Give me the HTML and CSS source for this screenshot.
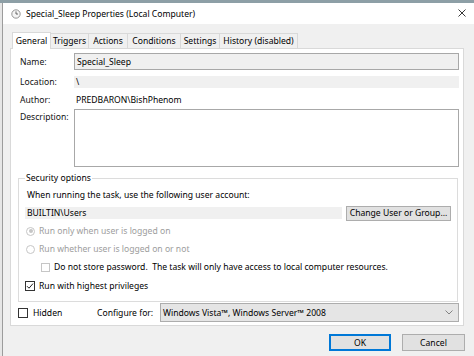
FILE: index.html
```
<!DOCTYPE html>
<html>
<head>
<meta charset="utf-8">
<link rel="stylesheet" href="styles.css">
</head>
<body>
<div class="topline"></div>
<div class="window">
  <div class="titlebar">
    <svg class="appicon" width="10" height="10" viewBox="0 0 10 10"><circle cx="5" cy="5" r="4.2" fill="#f4f4f4" stroke="#8a8a8a" stroke-width="0.9"/><path d="M5 2.4V5h2" fill="none" stroke="#555" stroke-width="0.9"/></svg>
    <span class="title">Special_Sleep Properties (Local Computer)</span>
    <svg class="close" width="8" height="8" viewBox="0 0 8 8"><path d="M0.5 0.5L7.5 7.5M7.5 0.5L0.5 7.5" stroke="#222" stroke-width="0.9"/></svg>
  </div>
  <div class="content">
    <div class="tabs">
      <div class="tab sel t-gen">General</div>
      <div class="tab t-trg">Triggers</div>
      <div class="tab t-act">Actions</div>
      <div class="tab t-cnd">Conditions</div>
      <div class="tab t-set">Settings</div>
      <div class="tab t-his">History (disabled)</div>
    </div>
    <div class="panel">
      <div class="row r-name"><span class="lbl">Name:</span><div class="field box ro">Special_Sleep</div></div>
      <div class="row r-loc"><span class="lbl">Location:</span><div class="field band">\</div></div>
      <div class="row r-auth"><span class="lbl">Author:</span><div class="field plain">PREDBARON\BishPhenom</div></div>
      <div class="row r-desc"><span class="lbl">Description:</span><div class="field box desc"></div></div>
      <fieldset class="group">
        <legend>Security options</legend>
        <div class="line intro">When running the task, use the following user account:</div>
        <div class="line account">
          <div class="acct">BUILTIN\Users</div>
          <div class="btn change">Change User or Group...</div>
        </div>
        <div class="line opt dis first"><span class="radio on"></span>Run only when user is logged on</div>
        <div class="line opt dis"><span class="radio"></span>Run whether user is logged on or not</div>
        <div class="line opt sub"><span class="check off"></span>Do not store password.&nbsp; The task will only have access to local computer resources.</div>
        <div class="line opt priv"><span class="check on"><svg width="8" height="8" viewBox="0 0 8 8"><path d="M1 4.2L3 6.2L7 1.6" fill="none" stroke="#222" stroke-width="1"/></svg></span>Run with highest privileges</div>
      </fieldset>
      <div class="bottomrow">
        <span class="check hid"></span><span class="hidden-lbl">Hidden</span>
        <span class="cfg-lbl">Configure for:</span>
        <div class="combo"><span>Windows Vista™, Windows Server™ 2008</span><svg width="8" height="5" viewBox="0 0 8 5"><path d="M0.5 0.5L4 4L7.5 0.5" fill="none" stroke="#777" stroke-width="0.9"/></svg></div>
      </div>
    </div>
    <div class="buttons">
      <div class="btn ok">OK</div>
      <div class="btn cancel">Cancel</div>
    </div>
  </div>
</div>
</body>
</html>
```
FILE: styles.css
```
* { box-sizing: border-box; }
html, body { margin: 0; padding: 0; }
body {
  width: 474px; height: 356px; overflow: hidden;
  background: #e6e6e6;
  font-family: "Noto Sans", "Open Sans", sans-serif;
  font-size: 8.6px; color: #000;
}
.topline { height: 3px; background: #8d9fa6; }
.window {
  margin-left: 2px; border-left: 1px solid #9c9c9c;
  height: 353px; background: #f0f0f0;
  display: flex; flex-direction: column;
}
.titlebar {
  height: 21px; background: #fff;
  display: flex; align-items: center;
  padding-left: 8px; padding-right: 8px;
}
.appicon { margin-right: 5px; }
.title { flex: 1; font-size: 8.6px; }
.close { margin-top: -1px; }
.content { padding: 7px 10px 0 7px; }
.tabs { display: flex; align-items: flex-end; padding-left: 2px; height: 17px; position: relative; z-index: 1; }
.tab {
  height: 15px; line-height: 14px; text-align: center;
  border: 1px solid #d9d9d9; border-left: none; border-bottom: none;
  background: #f0f0f0; white-space: nowrap;
}
.tab.sel {
  height: 17px; background: #fff; border-left: 1px solid #d9d9d9;
  margin-bottom: -1px; padding-top: 1px;
}
.t-gen { width: 39px; }
.t-trg { width: 38px; }
.t-act { width: 39px; }
.t-cnd { width: 53px; }
.t-set { width: 39px; }
.t-his { width: 78px; }
.panel {
  height: 278px; background: #fff; border: 1px solid #d9d9d9;
  padding: 4px 4px 0 9px;
  display: flex; flex-direction: column;
}
.row { display: flex; align-items: center; }
.lbl { width: 54px; flex: none; color: #111; white-space: nowrap; }
.field { flex: 1; height: 100%; display: flex; align-items: center; padding-left: 2px; }
.box { border: 1px solid #a8a8a8; }
.ro { background: #f0f0f0; }
.band { background: #f0f0f0; }
.r-name { height: 17px; }
.r-loc { height: 12px; margin-top: 6px; }
.r-auth { height: 12px; margin-top: 6px; }
.r-desc { height: 58px; margin-top: 3px; align-items: flex-start; }
.r-desc .lbl { margin-top: 2px; }
.desc { background: #fff; }
.group {
  margin: 5px 1px 0 -2px; padding: 0 6px 0 6px;
  border: 1px solid #dcdcdc; height: 130px;
}
.group legend { padding: 0 1px; }
.line { display: flex; align-items: center; white-space: nowrap; }
.intro { height: 12px; margin-top: 5px; padding-left: 2px; }
.account { height: 16px; margin-top: 4px; }
.acct { width: 317px; height: 12px; background: #f0f0f0; padding-left: 2px; display: flex; align-items: center; }
.btn {
  display: flex; align-items: center; justify-content: center; white-space: nowrap;
  background: #e1e1e1; border: 1px solid #adadad;
}
.change { width: 105px; height: 15px; margin-left: 4px; }
.opt { height: 18px; }
.opt.first { margin-top: 1px; }
.dis { color: #9d9d9d; }
.radio {
  width: 9px; height: 9px; border-radius: 50%; border: 1px solid #c6c6c6; flex: none;
  margin: 0 4px 0 1px; display: flex; align-items: center; justify-content: center; background: #fff;
}
.radio.on::after { content: ""; width: 4px; height: 4px; border-radius: 50%; background: #c6c6c6; }
.check {
  width: 10px; height: 10px; border: 1px solid #333; background: #fff;
  display: inline-flex; align-items: center; justify-content: center; flex: none;
}
.check.off { border-color: #c6c6c6; width: 9px; height: 9px; }
.sub .check { margin: 0 4px 0 16px; }
.priv { margin-top: 1px; }
.priv .check { margin: 0 4px 0 0; }
.bottomrow {
  display: flex; align-items: center; height: 19px; margin-top: 1px;
}
.check.hid { margin-left: -2px; }
.hidden-lbl { margin-left: 5px; width: 64px; }
.cfg-lbl { width: 63px; white-space: nowrap; }
.combo {
  flex: 1; height: 19px; white-space: nowrap;
  background: #e5e5e5; border: 1px solid #adadad;
  display: flex; align-items: center; justify-content: space-between; padding: 0 5px 0 2px;
}
.buttons { display: flex; justify-content: flex-end; padding-top: 8px; margin-right: -1px; }
.ok { width: 62px; height: 17px; border: 1px solid #0078d7; box-shadow: inset 0 0 0 1px #0078d7; }
.cancel { width: 63px; height: 17px; margin-left: 11px; }
```
